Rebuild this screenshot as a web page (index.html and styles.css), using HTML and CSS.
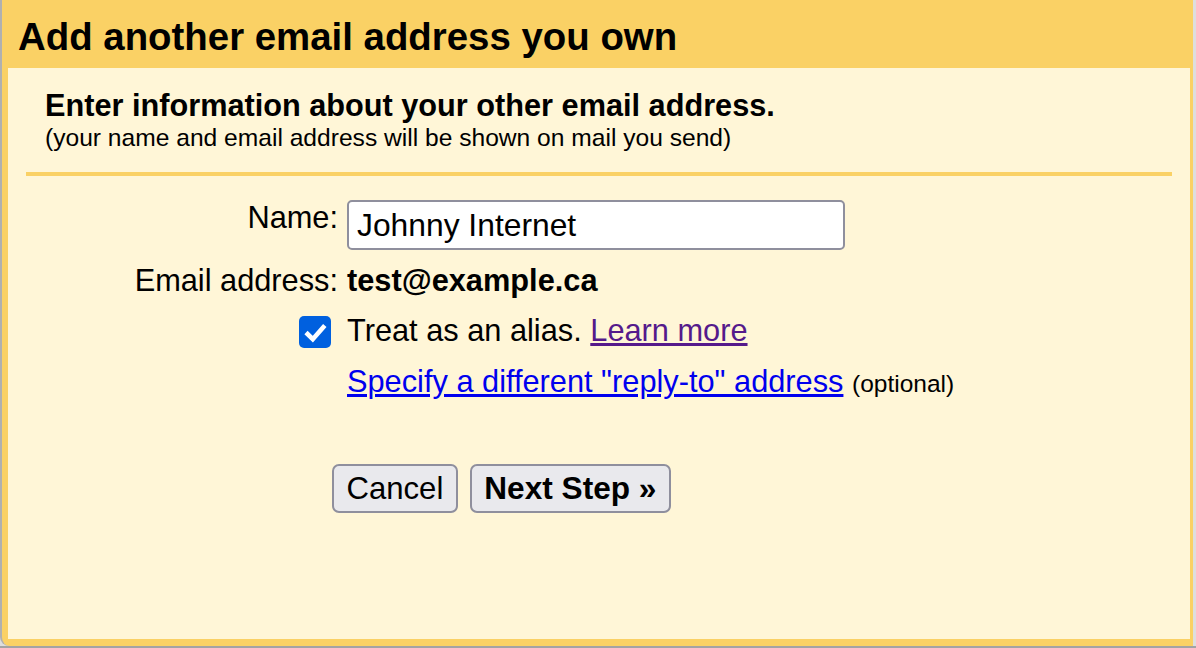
FILE: index.html
```html
<!DOCTYPE html>
<html lang="en">
<head>
<meta charset="utf-8">
<title>Add another email address you own</title>
<link rel="stylesheet" href="styles.css">
</head>
<body>
<div class="frame">
  <div class="dialog">
    <h1 class="title">Add another email address you own</h1>
    <div class="panel">
      <div class="intro">
        <div class="intro-head">Enter information about your other email address.</div>
        <div class="intro-note">(your name and email address will be shown on mail you send)</div>
      </div>
      <div class="rule"></div>
      <div class="form">
        <div class="row row-name">
          <label class="label" for="name">Name:</label>
          <div class="value"><input id="name" class="text-input" type="text" value="Johnny Internet"></div>
        </div>
        <div class="row row-email">
          <div class="label">Email address:</div>
          <div class="value"><b>test@example.ca</b></div>
        </div>
        <div class="row row-alias">
          <div class="label">
            <span class="checkbox">
              <svg viewBox="0 0 32 32" width="32" height="32" aria-hidden="true"><path d="M7 16.5 L13.8 23.2 L25.8 9.5" fill="none" stroke="#fff" stroke-width="4.6"/></svg>
            </span>
          </div>
          <div class="value">Treat as an alias. <a class="link visited" href="#">Learn more</a></div>
        </div>
        <div class="row row-reply">
          <div class="label"></div>
          <div class="value"><a class="link" href="#">Specify a different "reply-to" address</a> <span class="optional">(optional)</span></div>
        </div>
      </div>
      <div class="actions">
        <button class="btn" type="button">Cancel</button>
        <button class="btn btn-primary" type="button">Next Step »</button>
      </div>
    </div>
  </div>
</div>
</body>
</html>
```
FILE: styles.css
```css
* { box-sizing: border-box; }
html, body { margin: 0; padding: 0; }
body {
  width: 1196px;
  height: 648px;
  overflow: hidden;
  font-family: "Liberation Sans", Arial, sans-serif;
  color: #000;
  background: #dcdcdc;
}
.frame {
  width: 1196px;
  height: 648px;
  border-bottom: 2px solid #a3a3a3;
  background: #dedede;
}
.dialog {
  width: 1193px;
  height: 646px;
  border-left: 2px solid #b0b0b0;
  border-bottom-left-radius: 9px;
  background: #fad165;
  padding: 0 3px 7px 6px;
  display: flex;
  flex-direction: column;
}
.title {
  margin: 0 0 0 -6px;
  padding: 15px 0 9px 16px;
  font-size: 38.4px;
  line-height: 44px;
  font-weight: bold;
  height: 68px;
}
.panel {
  flex: 1;
  background: #fff6d7;
  padding: 20px 18px 0 18px;
}
.intro { padding-left: 19px; }
.intro-head {
  font-size: 30.7px;
  line-height: 36px;
  font-weight: bold;
}
.intro-note {
  font-size: 24.6px;
  line-height: 28px;
}
.rule {
  height: 4px;
  background: #fad165;
  margin-top: 20px;
}
.form {
  margin-top: 24px;
  font-size: 30.75px;
  line-height: 36px;
}
.row {
  display: grid;
  grid-template-columns: 312px 1fr;
  column-gap: 9px;
}
.label {
  text-align: right;
  display: flex;
  justify-content: flex-end;
  align-items: flex-start;
}
.row-email { margin-top: 13px; }
.row-alias { margin-top: 14px; }
.row-reply { margin-top: 15px; }
.text-input {
  display: block;
  margin-top: 0;
  width: 498px;
  height: 50px;
  border: 2px solid #8f8f9d;
  border-radius: 5px;
  background: #fff;
  padding: 0 8px;
  font-family: "Liberation Sans", Arial, sans-serif;
  font-size: 31.8px;
  color: #000;
  outline: none;
}
.checkbox {
  display: block;
  width: 32px;
  height: 32px;
  margin-top: 3px;
  margin-right: 7px;
  background: #0060df;
  border-radius: 5px;
}
.checkbox svg { display: block; }
.link {
  color: #0000ee;
  text-decoration: underline;
}
.link.visited { color: #551a8b; }
.optional { font-size: 24.5px; }
.actions {
  margin-top: 62px;
  padding-left: 306px;
  display: flex;
  gap: 12px;
}
.btn {
  height: 49px;
  padding: 0 12.5px;
  border: 2px solid #8f8f9d;
  border-radius: 7px;
  background: #e9e9ed;
  font-family: "Liberation Sans", Arial, sans-serif;
  font-size: 31.1px;
  line-height: 1;
  color: #000;
}
.btn-primary {
  font-weight: bold;
  font-size: 31.6px;
}
```
